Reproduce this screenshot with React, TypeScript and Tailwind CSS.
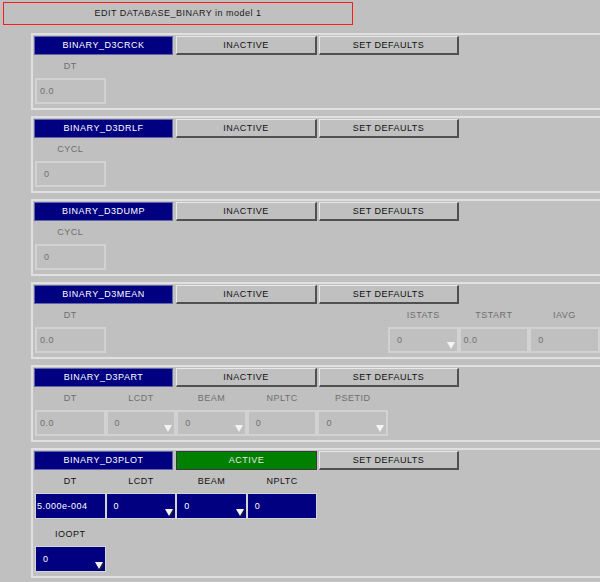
import React from "react";

type Field = {
  label: string;
  value: string;
  col: string;
  pad: string;
  drop?: boolean;
};

type PanelDef = {
  name: string;
  active?: boolean;
  rows: Field[][];
};

const panels: PanelDef[] = [
  {
    name: "BINARY_D3CRCK",
    rows: [[{ label: "DT", value: "0.0", col: "col-start-1", pad: "pl-[3px]" }]],
  },
  {
    name: "BINARY_D3DRLF",
    rows: [[{ label: "CYCL", value: "0", col: "col-start-1", pad: "pl-[7px]" }]],
  },
  {
    name: "BINARY_D3DUMP",
    rows: [[{ label: "CYCL", value: "0", col: "col-start-1", pad: "pl-[7px]" }]],
  },
  {
    name: "BINARY_D3MEAN",
    rows: [
      [
        { label: "DT", value: "0.0", col: "col-start-1", pad: "pl-[3px]" },
        { label: "ISTATS", value: "0", col: "col-start-6", pad: "pl-[7px]", drop: true },
        { label: "TSTART", value: "0.0", col: "col-start-7", pad: "pl-[3px]" },
        { label: "IAVG", value: "0", col: "col-start-8", pad: "pl-[7px]" },
      ],
    ],
  },
  {
    name: "BINARY_D3PART",
    rows: [
      [
        { label: "DT", value: "0.0", col: "col-start-1", pad: "pl-[3px]" },
        { label: "LCDT", value: "0", col: "col-start-2", pad: "pl-[7px]", drop: true },
        { label: "BEAM", value: "0", col: "col-start-3", pad: "pl-[7px]", drop: true },
        { label: "NPLTC", value: "0", col: "col-start-4", pad: "pl-[7px]" },
        { label: "PSETID", value: "0", col: "col-start-5", pad: "pl-[7px]", drop: true },
      ],
    ],
  },
  {
    name: "BINARY_D3PLOT",
    active: true,
    rows: [
      [
        { label: "DT", value: "5.000e-004", col: "col-start-1", pad: "pl-[1px]" },
        { label: "LCDT", value: "0", col: "col-start-2", pad: "pl-[7px]", drop: true },
        { label: "BEAM", value: "0", col: "col-start-3", pad: "pl-[7px]", drop: true },
        { label: "NPLTC", value: "0", col: "col-start-4", pad: "pl-[7px]" },
      ],
      [{ label: "IOOPT", value: "0", col: "col-start-1", pad: "pl-[7px]", drop: true }],
    ],
  },
];

function Tri({ active }: { active?: boolean }) {
  return (
    <svg
      className="absolute right-[1px] bottom-[1px]"
      width="9"
      height="9"
      viewBox="0 0 9 9"
    >
      {active && <polygon points="2,2 9,2 5.5,9" fill="#202020" />}
      <polygon points="0,1 8,1 4,8" fill="#f4f4f4" />
    </svg>
  );
}

function Panel({ p }: { p: PanelDef }) {
  const a = !!p.active;
  return (
    <div className="ml-[31px] w-[600px] border-2 border-[#e0e0e0] pt-[1px] pb-[4px]">
      <div className="flex h-[19px] ml-[1px]">
        <div className="w-[139px] h-full bg-[#000080] border border-[#6464a8] text-white flex items-center justify-center">
          {p.name}
        </div>
        {a ? (
          <div className="ml-[3px] w-[141px] h-full bg-[#008000] border border-[#3a3a3a] text-[#e8e8e8] flex items-center justify-center">
            ACTIVE
          </div>
        ) : (
          <div className="ml-[3px] w-[141px] h-full bg-[#c0c0c0] border-t border-l border-t-[#e8e8e8] border-l-[#e8e8e8] border-b-2 border-r-2 border-b-[#505050] border-r-[#505050] text-[#111] flex items-center justify-center">
            INACTIVE
          </div>
        )}
        <div className="ml-[2px] w-[140px] h-full bg-[#c0c0c0] border-t border-l border-t-[#e8e8e8] border-l-[#e8e8e8] border-b-2 border-r-2 border-b-[#505050] border-r-[#505050] text-[#111] flex items-center justify-center">
          SET DEFAULTS
        </div>
      </div>
      {p.rows.map((row, i) => (
        <div key={i} className={i > 0 ? "mt-[4px]" : ""}>
          <div className="ml-[2px] h-[23px] grid grid-cols-[repeat(8,70.6px)] items-center">
            {row.map((f) => (
              <div
                key={f.label}
                className={`${f.col} row-start-1 text-center ${a ? "text-[#111]" : "text-[#6e6e6e]"}`}
              >
                {f.label}
              </div>
            ))}
          </div>
          <div className="ml-[2px] h-[26px] grid grid-cols-[repeat(8,70.6px)]">
            {row.map((f) => (
              <div
                key={f.label}
                className={`${f.col} row-start-1 relative h-[26px] flex items-center ${f.pad} ${
                  a
                    ? "bg-[#000080] border border-[#d4d4d4] text-white"
                    : "border-2 border-[#d2d2d2] text-[#707070]"
                }`}
              >
                {f.value}
                {f.drop && <Tri active={a} />}
              </div>
            ))}
          </div>
        </div>
      ))}
    </div>
  );
}

export default function App() {
  return (
    <div className="w-[600px] h-[582px] overflow-hidden bg-[#c0c0c0] font-['Liberation_Sans',Arial,sans-serif] text-[9px] tracking-[0.5px] leading-none">
      <div className="pt-[2px] pl-[3px]">
        <div className="w-[350px] h-[23px] border border-[#ff1a1a] flex items-center justify-center text-[#1a1a1a]">
          EDIT DATABASE_BINARY in model 1
        </div>
      </div>
      <div className="mt-[8px] flex flex-col gap-[6px]">
        {panels.map((p) => (
          <Panel key={p.name} p={p} />
        ))}
      </div>
    </div>
  );
}
